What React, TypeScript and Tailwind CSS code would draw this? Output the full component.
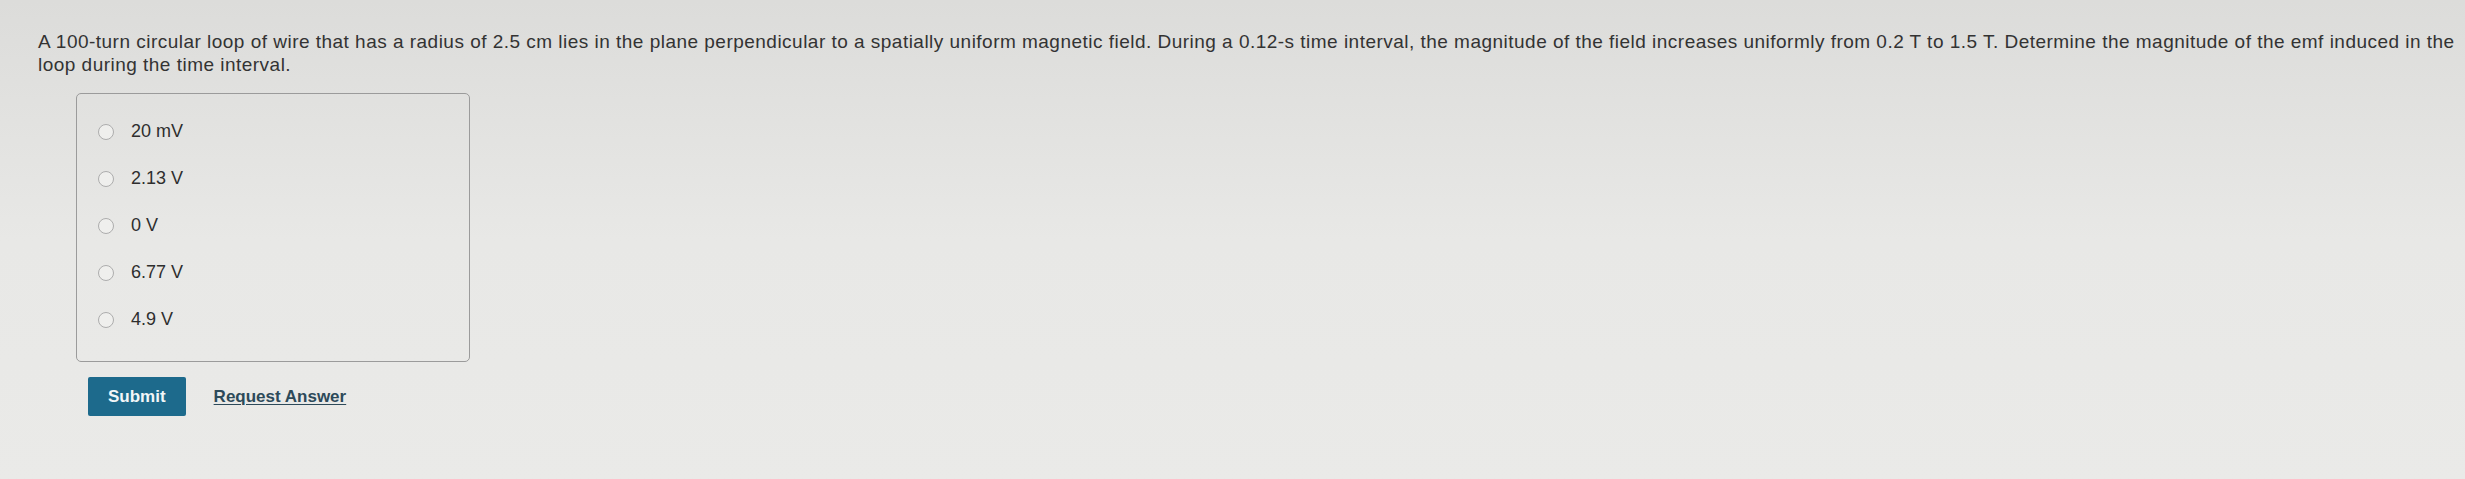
import { useState } from "react"

const options = ["20 mV", "2.13 V", "0 V", "6.77 V", "4.9 V"]

export default function App() {
  const [selected, setSelected] = useState<number | null>(null)

  return (
    <div
      className="min-h-[479px] w-full bg-gradient-to-b from-[#dcdcda] via-[#e8e8e6] to-[#eaeae8] pl-[38px] pr-[6px] pt-[30px] text-[#333]"
      style={{ fontFamily: '"Liberation Sans", Arial, sans-serif' }}
    >
      <p className="max-w-[2422px] text-[19px] leading-[23px] tracking-[0.48px]">
        A 100-turn circular loop of wire that has a radius of 2.5 cm lies in the plane perpendicular to a spatially
        uniform magnetic field. During a 0.12-s time interval, the magnitude of the field increases uniformly from 0.2 T
        to 1.5 T. Determine the magnitude of the emf induced in the loop during the time interval.
      </p>

      <div className="ml-[38px] mt-[17px] w-[394px] rounded-[5px] border border-[#9b9b9b] pb-[18px] pt-[14px] pl-[21px]">
        {options.map((opt, i) => (
          <label key={opt} className="flex h-[47px] cursor-pointer items-center gap-[17px]">
            <span
              onClick={() => setSelected(i)}
              className="flex h-4 w-4 items-center justify-center rounded-full border border-[#adadad] bg-[#efefed]"
            >
              {selected === i && <span className="h-2 w-2 rounded-full bg-[#1d6a8c]" />}
            </span>
            <span className="text-[18px] text-[#2e2e2e]">{opt}</span>
          </label>
        ))}
      </div>

      <div className="ml-[50px] mt-[15px] flex items-center gap-[28px]">
        <button className="h-[39px] rounded-[2px] bg-[#1d6a8c] px-[20px] text-[17px] font-bold text-[#f2f6f8]">
          Submit
        </button>
        <button className="text-[17px] font-bold text-[#2d4a5a] underline underline-offset-2">Request Answer</button>
      </div>
    </div>
  )
}
